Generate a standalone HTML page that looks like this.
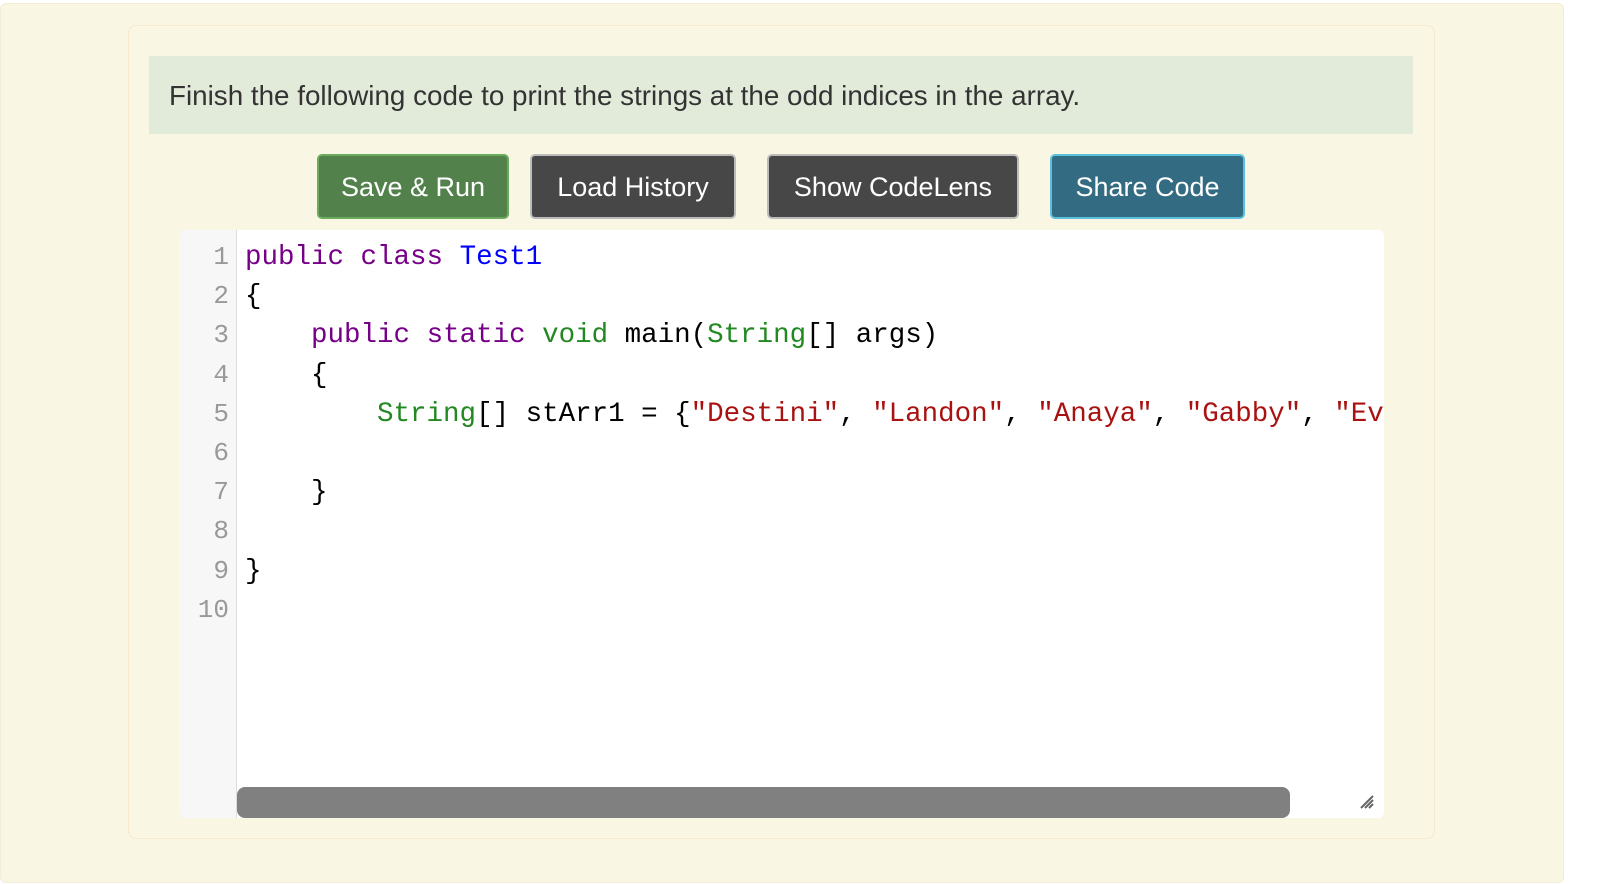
<!DOCTYPE html>
<html><head><style>
body{margin:0;background:#fff;width:1600px;height:884px;overflow:hidden;font-family:"Liberation Sans",sans-serif}
.outer{position:absolute;left:0;top:3px;width:1564px;height:880px;background:#faf6e4;border:1px solid #f5ecd5;border-radius:6px;box-sizing:border-box}
.card{position:absolute;left:128px;top:25px;width:1307px;height:814px;border:1px solid #f5e9d0;border-radius:8px;box-sizing:border-box;background:#faf6e4}
.instr{position:absolute;left:149px;top:56px;width:1264px;height:78px;background:#e2ebda;color:#333;font-size:27.8px;line-height:80px;padding-left:20px;box-sizing:border-box}
.btn{position:absolute;top:154px;height:65px;color:#fff;font-size:27px;line-height:63px;text-align:center;border-radius:5px;box-sizing:border-box;border:2px solid}
.ed{position:absolute;left:179px;top:230px;width:1205px;height:588px;background:#fff;border-radius:6px;overflow:hidden}
.gut{position:absolute;left:0;top:0;width:57px;height:100%;background:#f7f7f7;border-right:1px solid #ddd}
.code{position:absolute;left:66px;top:8px;font-family:"Liberation Mono",monospace;font-size:27.5px;line-height:39.2px;white-space:pre;color:#000}
.k{color:#708}.t{color:#282}.d{color:#00f}.s{color:#a11}
.sb{position:absolute;left:58px;top:557px;width:1053px;height:31px;background:#808080;border-radius:8px}
</style></head><body>
<div class="outer"></div>
<div class="card"></div>
<div class="instr">Finish the following code to print the strings at the odd indices in the array.</div>
<div class="btn" style="left:317px;width:192px;background:#52814b;border-color:#6aab5e">Save &amp; Run</div>
<div class="btn" style="left:530px;width:206px;background:#474747;border-color:#bbb">Load History</div>
<div class="btn" style="left:767px;width:252px;background:#474747;border-color:#bbb">Show CodeLens</div>
<div class="btn" style="left:1050px;width:195px;background:#336b82;border-color:#5bc0de">Share Code</div>
<div class="ed">
<div class="gut"></div>
<div class="code" style="left:14px;width:36px;text-align:right;color:#999;font-size:26px">1
2
3
4
5
6
7
8
9
10</div>
<div class="code"><span class="k">public</span> <span class="k">class</span> <span class="d">Test1</span>
{
    <span class="k">public</span> <span class="k">static</span> <span class="t">void</span> main(<span class="t">String</span>[] args)
    {
        <span class="t">String</span>[] stArr1 = {<span class="s">"Destini"</span>, <span class="s">"Landon"</span>, <span class="s">"Anaya"</span>, <span class="s">"Gabby"</span>, <span class="s">"Ev</span>

    }

}
</div>
<div class="sb"></div>
<svg style="position:absolute;left:1180px;top:564px" width="16" height="16"><path d="M2 14L14 2M6 14L14 6M10 14L14 10" stroke="#666" stroke-width="2"/></svg>
</div>
</body></html>
